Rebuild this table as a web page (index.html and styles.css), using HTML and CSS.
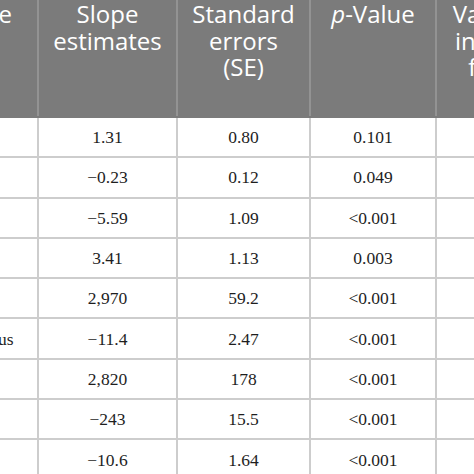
FILE: index.html
```html
<!DOCTYPE html>
<html lang="en">
<head>
<meta charset="utf-8">
<title>Regression table</title>
<link rel="stylesheet" href="styles.css">
</head>
<body>
<div class="crop">
  <table class="stats">
    <colgroup>
      <col class="c-var">
      <col class="c-slope">
      <col class="c-se">
      <col class="c-p">
      <col class="c-vif">
    </colgroup>
    <thead>
      <tr>
        <th class="h-var">Variable</th>
        <th>Slope estimates</th>
        <th>Standard errors (SE)</th>
        <th><i>p</i>-Value</th>
        <th>Variance inflation factor</th>
      </tr>
    </thead>
    <tbody>
      <tr><td class="lbl"></td><td>1.31</td><td>0.80</td><td>0.101</td><td></td></tr>
      <tr><td class="lbl"></td><td>&minus;0.23</td><td>0.12</td><td>0.049</td><td></td></tr>
      <tr><td class="lbl"></td><td>&minus;5.59</td><td>1.09</td><td>&lt;0.001</td><td></td></tr>
      <tr><td class="lbl"></td><td>3.41</td><td>1.13</td><td>0.003</td><td></td></tr>
      <tr><td class="lbl"></td><td>2,970</td><td>59.2</td><td>&lt;0.001</td><td></td></tr>
      <tr><td class="lbl">Smoking status</td><td>&minus;11.4</td><td>2.47</td><td>&lt;0.001</td><td></td></tr>
      <tr><td class="lbl"></td><td>2,820</td><td>178</td><td>&lt;0.001</td><td></td></tr>
      <tr><td class="lbl"></td><td>&minus;243</td><td>15.5</td><td>&lt;0.001</td><td></td></tr>
      <tr><td class="lbl"></td><td>&minus;10.6</td><td>1.64</td><td>&lt;0.001</td><td></td></tr>
    </tbody>
  </table>
</div>
</body>
</html>
```

FILE: styles.css
```css
html, body {
  margin: 0;
  padding: 0;
  background: #ffffff;
}

.crop {
  width: 474px;
  height: 474px;
  overflow: hidden;
}

.stats {
  border-collapse: collapse;
  table-layout: fixed;
  width: 663px;
  margin-left: -98px;
}

.c-var { width: 135px; }
.c-slope { width: 139px; }
.c-se { width: 133px; }
.c-p { width: 126px; }
.c-vif { width: 130px; }

.stats thead tr {
  height: 117px;
}

.stats th {
  background: #7b7b7b;
  color: #ffffff;
  font-family: "Open Sans", "Noto Sans", sans-serif;
  font-weight: 400;
  font-size: 24px;
  line-height: 26.5px;
  text-align: center;
  vertical-align: top;
  padding: 1px 10px 0;
  border-top: none;
  border-left: 2px solid #939393;
  border-right: 2px solid #939393;
  border-bottom: 2px solid #7b7b7b;
}

.stats th.h-var {
  padding-left: 2px;
  padding-right: 10px;
}

.stats th i {
  font-style: italic;
}

.stats tbody tr {
  height: 40.3px;
}

.stats td {
  font-family: "Liberation Serif", "Times New Roman", serif;
  font-size: 17.5px;
  color: #1e1e1e;
  text-align: center;
  vertical-align: middle;
  padding: 1px 4px 0;
  border: 2px solid #cdcdcd;
  white-space: nowrap;
}

.stats td.lbl {
  text-align: left;
  padding-left: 2px;
}
```
